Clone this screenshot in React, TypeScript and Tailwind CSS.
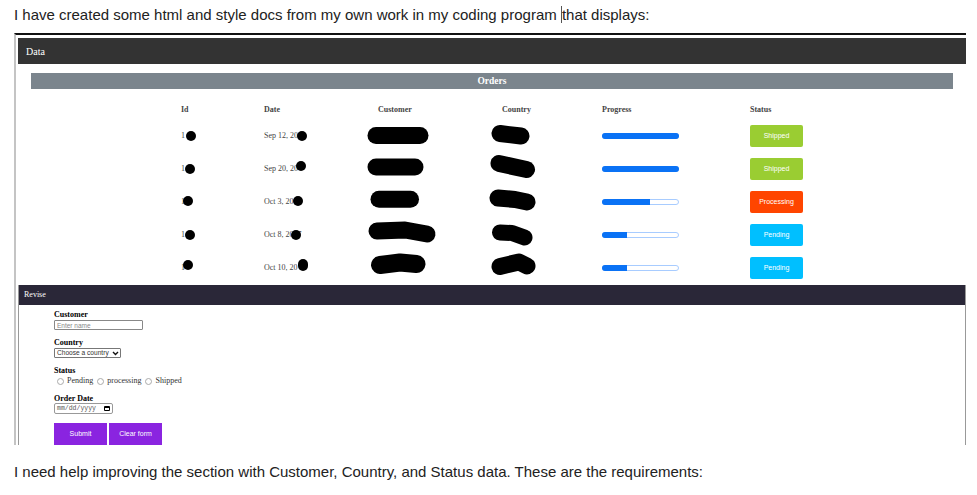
import React from 'react';

// redaction scribble, drawn as a fat rounded stroke
const Blob: React.FC<{ d: string; sw: number }> = ({ d, sw }) => (
  <svg width="70" height="17" viewBox="0 0 70 17" className="absolute left-0 top-0 overflow-visible">
    <path d={d} fill="none" stroke="#000" strokeWidth={sw} strokeLinecap="round" strokeLinejoin="round" />
  </svg>
);

const Dot: React.FC<{ className: string }> = ({ className }) => (
  <span className={`absolute rounded-full bg-black ${className}`} />
);

interface Row {
  id: string;
  date: string;
  idDot: string;
  dateDot: string;
  customer: React.ReactNode;
  country: React.ReactNode;
  progress: string;
  status: string;
  color: string;
}

const rows: Row[] = [
  {
    id: '1',
    date: 'Sep 12, 20',
    idDot: 'left-[5px] top-[1px] w-[10px] h-[10px]',
    dateDot: 'left-[33px] top-[1px] w-[10px] h-[10px]',
    customer: <Blob sw={17} d="M9 8.5 L53 8.5" />,
    country: <Blob sw={17} d="M9 6.5 L30 9" />,
    progress: 'w-[77px] rounded-full',
    status: 'Shipped',
    color: 'bg-[#9acd32]',
  },
  {
    id: '1',
    date: 'Sep 20, 20',
    idDot: 'left-[4px] top-[1px] w-[10px] h-[10px]',
    dateDot: 'left-[32px] top-[-2px] w-[10px] h-[10px]',
    customer: <Blob sw={17} d="M9 7 L48 7" />,
    country: <Blob sw={17} d="M8 3.5 L35.5 9.5" />,
    progress: 'w-[77px] rounded-full',
    status: 'Shipped',
    color: 'bg-[#9acd32]',
  },
  {
    id: '1',
    date: 'Oct 3, 20',
    idDot: 'left-[2px] top-[0px] w-[10px] h-[10px]',
    dateDot: 'left-[29px] top-[0px] w-[10px] h-[10px]',
    customer: <Blob sw={17} d="M12 6.2 L43.5 6.2" />,
    country: <Blob sw={17} d="M7 5 L24 6.5 L36 9" />,
    progress: 'w-[48px] rounded-l-full',
    status: 'Processing',
    color: 'bg-[#ff4500]',
  },
  {
    id: '1',
    date: 'Oct 8, 2017',
    idDot: 'left-[4px] top-[1px] w-[10px] h-[10px]',
    dateDot: 'left-[27px] top-[1px] w-[10px] h-[10px]',
    customer: <Blob sw={17} d="M10 5 L38 4 L60 8" />,
    country: <Blob sw={16} d="M9 6.5 L21 7 L33.5 11.5" />,
    progress: 'w-[25px] rounded-l-full',
    status: 'Pending',
    color: 'bg-[#00bfff]',
  },
  {
    id: '1',
    date: 'Oct 10, 20',
    idDot: 'left-[2px] top-[-2px] w-[10px] h-[10px]',
    dateDot: 'left-[34px] top-[-3px] w-[10px] h-[12px]',
    customer: <Blob sw={18} d="M13 6 L33 3.5 L49.5 5" />,
    country: <Blob sw={17} d="M9 7.5 L28 3 L36 7" />,
    progress: 'w-[25px] rounded-l-full',
    status: 'Pending',
    color: 'bg-[#00bfff]',
  },
];

const Radio: React.FC<{ className?: string }> = ({ className = '' }) => (
  <span className={`w-[7px] h-[7px] rounded-full border border-[#aaa] ${className}`} />
);

export default function App() {
  return (
    <div className="w-[977px] h-[495px] overflow-hidden bg-white font-['Liberation_Sans',sans-serif] text-[#222]">
      <p className="pl-[14px] pt-[6px] h-[33px] text-[15px] leading-[18px]">
        I have created some html and style docs from my own work in my coding program{' '}
        <span className="border-l border-[#555]">that displays:</span>
      </p>

      <div className="ml-[14px] w-[952px] h-[412px] border-t-2 border-t-[#111] border-l-2 border-l-[#c4c4c4] font-['Liberation_Serif',serif]">
        <div className="ml-[2px] mt-[3px] w-[948px] h-[26px] bg-[#333333] pl-[8px] flex items-center text-[10px] text-white">
          Data
        </div>

        <div className="ml-[15px] mt-[9px] w-[922px] h-[16px] bg-[#7b858d] flex items-center justify-center text-[9.5px] font-bold text-white">
          Orders
        </div>

        <div className="grid grid-cols-[83px_103px_124px_111px_148px_70px] pl-[165px] mt-[14px] h-[13px] items-center text-[8px] font-bold text-[#444]">
          <span>Id</span>
          <span>Date</span>
          <span className="pl-[11px]">Customer</span>
          <span className="pl-[11px]">Country</span>
          <span>Progress</span>
          <span>Status</span>
        </div>

        <div className="mt-[3px] pl-[165px]">
          {rows.map((r, i) => (
            <div
              key={i}
              className="grid grid-cols-[83px_103px_124px_111px_148px_70px] h-[33px] items-center text-[8px] text-[#444]"
            >
              <span className="relative">
                {r.id}
                <Dot className={r.idDot} />
              </span>
              <span className="relative">
                {r.date}
                <Dot className={r.dateDot} />
              </span>
              <span className="relative h-[17px]">{r.customer}</span>
              <span className="relative h-[17px]">{r.country}</span>
              <div className="mt-[1px] w-[77px] h-[6px] rounded-full border border-[#a8ccff] bg-white">
                <div className={`-m-[1px] h-[6px] bg-[#0a72f5] ${r.progress}`} />
              </div>
              <div
                className={`mt-[1px] w-[53px] h-[22px] rounded-[2px] flex items-center justify-center font-['Liberation_Sans',sans-serif] text-[7px] text-white ${r.color}`}
              >
                {r.status}
              </div>
            </div>
          ))}
        </div>

        <div className="ml-[2px] mt-[1px] w-[948px] h-[160px] border-x border-x-[#999]">
          <div className="h-[20px] bg-[#2a2738] pl-[5px] flex items-center text-[8px] text-white">Revise</div>
          <form className="pl-[35px] text-[8px] leading-[8px] text-[#333]">
            <div className="mt-[6px] font-bold text-black">Customer</div>
            <input
              readOnly
              placeholder="Enter name"
              className="block mt-[1px] w-[89px] h-[10px] border border-[#888] rounded-[1px] px-[2px] text-[6.5px] font-['Liberation_Sans',sans-serif] placeholder:text-[#888]"
            />
            <div className="mt-[9px] font-bold text-black">Country</div>
            <div className="mt-[1px] w-[67px] h-[10px] border border-[#777] rounded-[1px] pl-[2px] pr-[1px] flex items-center justify-between text-[6.6px] font-['Liberation_Sans',sans-serif]">
              <span>Choose a country</span>
              <svg width="7" height="5" viewBox="0 0 7 5">
                <path d="M1 1 L3.5 3.5 L6 1" fill="none" stroke="#111" strokeWidth="1.4" />
              </svg>
            </div>
            <div className="mt-[9px] font-bold text-black">Status</div>
            <div className="mt-[1px] flex items-center h-[10px] pl-[3px] gap-[3px]">
              <Radio />
              <span>Pending</span>
              <Radio className="ml-[1px]" />
              <span>processing</span>
              <Radio className="ml-[1px]" />
              <span>Shipped</span>
            </div>
            <div className="mt-[9px] font-bold text-black">Order Date</div>
            <div className="w-[59px] h-[11px] border border-[#999] rounded-[2px] pl-[2px] pr-[2px] flex items-center justify-between text-[6.5px] font-['Liberation_Mono',monospace] text-[#555]">
              <span>mm/dd/yyyy</span>
              <span className="w-[6px] h-[5px] border border-black border-t-2 rounded-[1px]" />
            </div>
            <div className="mt-[9px] flex gap-[2px]">
              <div className="w-[53px] h-[22px] bg-[#8a24e0] flex items-center justify-center text-[7px] text-white font-['Liberation_Sans',sans-serif]">
                Submit
              </div>
              <div className="w-[53px] h-[22px] bg-[#8a24e0] flex items-center justify-center text-[7px] text-white font-['Liberation_Sans',sans-serif]">
                Clear form
              </div>
            </div>
          </form>
        </div>
      </div>

      <p className="pl-[14px] pt-[18px] text-[15px] leading-[18px]">
        I need help improving the section with Customer, Country, and Status data. These are the requirements:
      </p>
    </div>
  );
}
